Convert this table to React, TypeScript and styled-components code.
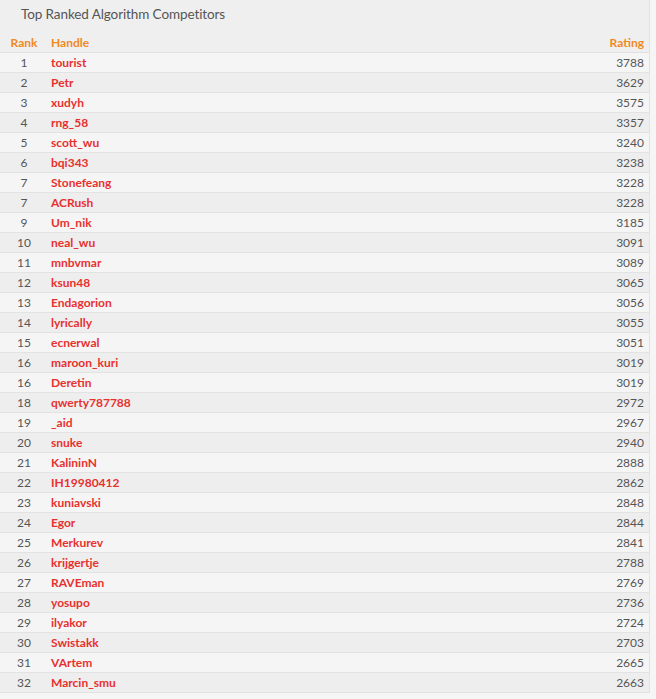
import React from "react";
import styled, { createGlobalStyle } from "styled-components";

const Global = createGlobalStyle`
  html, body { margin: 0; padding: 0; background: #f5f5f5; }
  body { font-family: Lato, "Open Sans", sans-serif; }
`;

const Panel = styled.div`
  width: 650px;
  background: #efefef;
  border-right: 1px solid #e2e2e2;
  box-sizing: border-box;
`;

const Title = styled.h2`
  margin: 0;
  padding: 6px 0 0 21px;
  height: 33px;
  box-sizing: border-box;
  font-size: 13.5px;
  font-weight: 400;
  color: #555;
  letter-spacing: -0.1px;
`;

const Table = styled.table`
  width: 100%;
  border-collapse: collapse;
  font-size: 12px;
`;

const Th = styled.th<{ $align: string; $w?: string }>`
  height: 19px;
  padding: 0 ${(p) => (p.$align === "right" ? "5px" : p.$align === "center" ? "3px" : "0")} 0 0;
  text-align: ${(p) => p.$align};
  width: ${(p) => p.$w || "auto"};
  color: #f0891e;
  font-weight: 700;
  border-bottom: 1px solid #e2e2e2;
  box-sizing: border-box;
`;

const Tr = styled.tr<{ $odd: boolean }>`
  background: ${(p) => (p.$odd ? "#f5f5f5" : "#eeeeee")};
  border-bottom: 1px solid #e3e3e3;
`;

const RankCell = styled.td`
  height: 19px;
  padding: 0 3px 0 0;
  text-align: center;
  color: #555;
`;

const HandleCell = styled.td`
  padding: 0;
  color: #e8312f;
  font-weight: 700;
`;

const RatingCell = styled.td`
  padding: 0 5px 0 0;
  text-align: right;
  color: #555;
`;

const data: [number, string, number][] = [
  [1, "tourist", 3788],
  [2, "Petr", 3629],
  [3, "xudyh", 3575],
  [4, "rng_58", 3357],
  [5, "scott_wu", 3240],
  [6, "bqi343", 3238],
  [7, "Stonefeang", 3228],
  [7, "ACRush", 3228],
  [9, "Um_nik", 3185],
  [10, "neal_wu", 3091],
  [11, "mnbvmar", 3089],
  [12, "ksun48", 3065],
  [13, "Endagorion", 3056],
  [14, "lyrically", 3055],
  [15, "ecnerwal", 3051],
  [16, "maroon_kuri", 3019],
  [16, "Deretin", 3019],
  [18, "qwerty787788", 2972],
  [19, "_aid", 2967],
  [20, "snuke", 2940],
  [21, "KalininN", 2888],
  [22, "IH19980412", 2862],
  [23, "kuniavski", 2848],
  [24, "Egor", 2844],
  [25, "Merkurev", 2841],
  [26, "krijgertje", 2788],
  [27, "RAVEman", 2769],
  [28, "yosupo", 2736],
  [29, "ilyakor", 2724],
  [30, "Swistakk", 2703],
  [31, "VArtem", 2665],
  [32, "Marcin_smu", 2663],
];

export default function App() {
  return (
    <>
      <Global />
      <Panel>
        <Title>Top Ranked Algorithm Competitors</Title>
        <Table>
          <thead>
            <tr>
              <Th $align="center" $w="51px">Rank</Th>
              <Th $align="left">Handle</Th>
              <Th $align="right">Rating</Th>
            </tr>
          </thead>
          <tbody>
            {data.map(([r, h, v], i) => (
              <Tr key={h} $odd={i % 2 === 0}>
                <RankCell>{r}</RankCell>
                <HandleCell>{h}</HandleCell>
                <RatingCell>{v}</RatingCell>
              </Tr>
            ))}
          </tbody>
        </Table>
      </Panel>
    </>
  );
}
